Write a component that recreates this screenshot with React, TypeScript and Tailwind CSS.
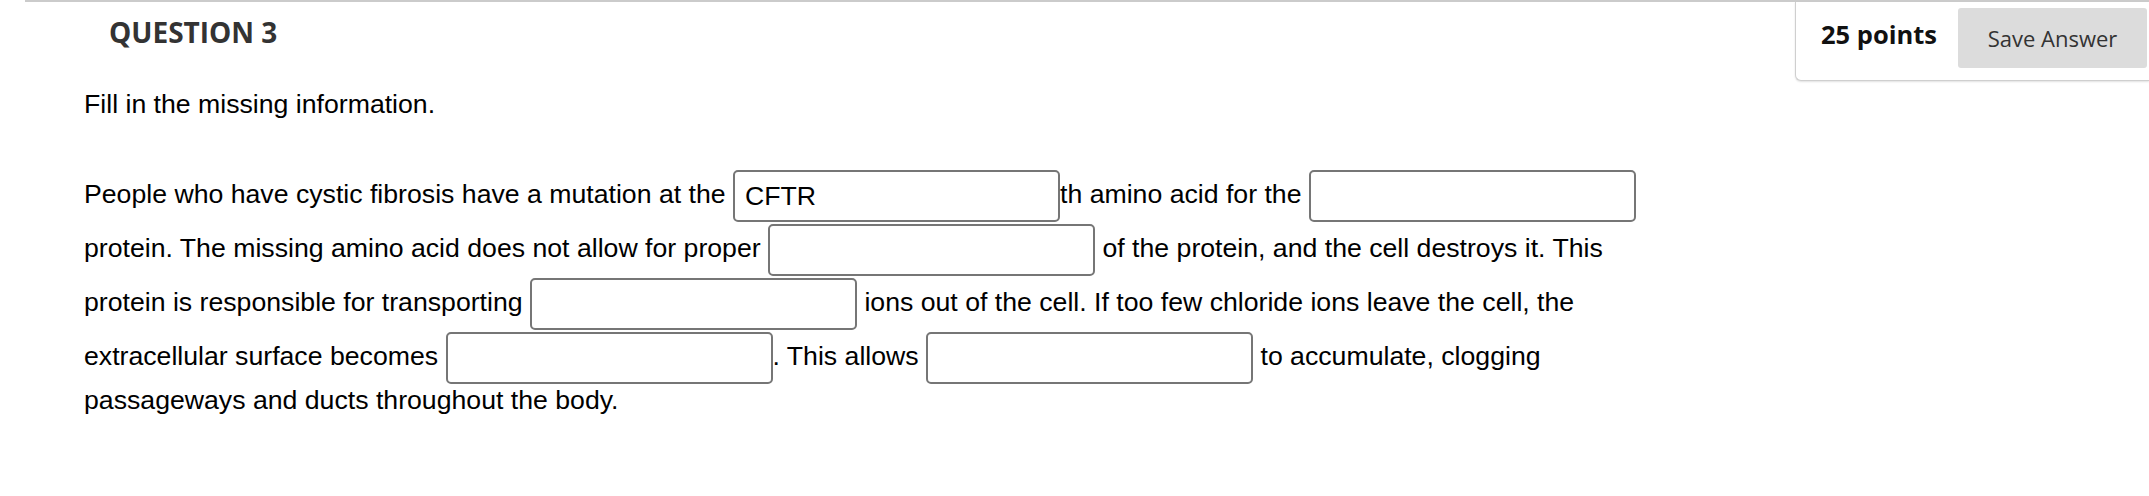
import React from "react";

function Blank({ value = "" }: { value?: string }) {
  return (
    <input
      type="text"
      defaultValue={value}
      className="my-px inline-block h-[52px] w-[327px] rounded-[5px] border-2 border-[#767676] bg-white px-[10px] align-[-2px] text-black outline-none"
    />
  );
}

export default function App() {
  return (
    <div className="min-h-[496px] w-[2149px] overflow-hidden bg-white">
      <div className="ml-[25px] border-t-2 border-[#cbcbcb]">
        <div className="flex items-start justify-between">
          <h2 className="pl-[84px] pt-[16px] font-['Open_Sans',sans-serif] text-[28px] leading-none font-bold text-[#333333]">
            QUESTION 3
          </h2>
          <div className="flex items-center rounded-bl-[6px] border-b border-l border-[#cfcfcf] bg-white pt-[6px] pr-[2px] pb-[12px] pl-[25px] font-['Open_Sans',sans-serif] shadow-[0_1px_2px_rgba(0,0,0,0.12)]">
            <span className="mb-[6px] text-[25.5px] leading-none font-bold text-[#111111]">
              25 points
            </span>
            <button
              type="button"
              className="ml-[21px] h-[60px] w-[189px] rounded-[3px] bg-[#dcdcdc] text-[22px] text-[#333333]"
            >
              Save Answer
            </button>
          </div>
        </div>
        <div className="ml-[59px] font-['Liberation_Sans',Arial,sans-serif] text-[26.67px] text-black">
          <p className="mt-[8px] leading-[31px]">Fill in the missing information.</p>
          <p className="mt-[49px] w-[1600px] leading-[31px]">
            People who have cystic fibrosis have a mutation at the <Blank value="CFTR" />
            th amino acid for the <Blank /> protein. The missing amino acid does not allow for
            proper <Blank /> of the protein, and the cell destroys it. This protein is
            responsible for transporting <Blank /> ions out of the cell. If too few chloride ions
            leave the cell, the extracellular surface becomes <Blank />. This allows <Blank /> to
            accumulate, clogging passageways and ducts throughout the body.
          </p>
        </div>
      </div>
    </div>
  );
}
